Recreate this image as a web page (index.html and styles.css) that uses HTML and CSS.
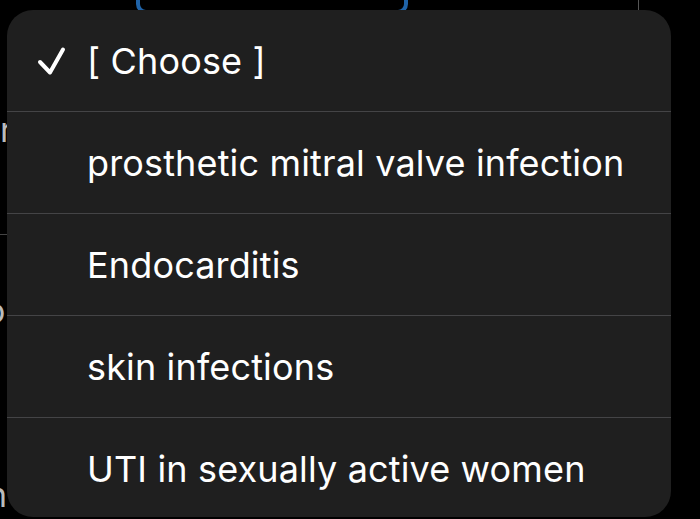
FILE: index.html
```html
<!DOCTYPE html>
<html>
<head>
<meta charset="utf-8">
<link rel="stylesheet" href="styles.css">
</head>
<body>
<div class="backdrop">
  <div class="field"></div>
  <div class="vline"></div>
  <div class="hline"></div>
  <span class="peek peek-r">r</span>
  <span class="peek peek-o">o</span>
  <span class="peek peek-n">n</span>
</div>
<div class="menu">
  <div class="item">
    <svg class="check" width="30" height="30" viewBox="0 0 30 30"><path d="M3 16 L13 26.5 L26 3.5" fill="none" stroke="#fff" stroke-width="4" stroke-linecap="round" stroke-linejoin="round"/></svg>
    <span class="label">[ Choose ]</span>
  </div>
  <div class="item"><span class="label">prosthetic mitral valve infection</span></div>
  <div class="item"><span class="label">Endocarditis</span></div>
  <div class="item"><span class="label">skin infections</span></div>
  <div class="item"><span class="label">UTI in sexually active women</span></div>
</div>
</body>
</html>
```
FILE: styles.css
```css
html, body {
  margin: 0;
  padding: 0;
  background: #000;
  width: 700px;
  height: 519px;
  overflow: hidden;
  font-family: Inter, "Liberation Sans", sans-serif;
}
.backdrop {
  position: relative;
  width: 700px;
  height: 519px;
}
.field {
  position: absolute;
  left: 136px;
  top: -20px;
  width: 264px;
  height: 26px;
  border: 4px solid #1f63a8;
  border-radius: 10px;
  background: #000;
}
.vline {
  position: absolute;
  left: 638px;
  top: 0;
  width: 1px;
  height: 14px;
  background: #555;
}
.hline {
  position: absolute;
  left: 0;
  top: 234px;
  width: 10px;
  height: 1px;
  background: #444;
}
.peek {
  position: absolute;
  color: #bbb;
  font-size: 34px;
  line-height: 1;
}
.peek-r { left: 0; top: 113px; }
.peek-o { left: -15px; top: 294px; }
.peek-n { left: -13px; top: 478px; }
.menu {
  position: absolute;
  left: 7px;
  top: 10px;
  width: 664px;
  height: 507px;
  border-radius: 26px;
  background: #1f1f1f;
  overflow: hidden;
  display: flex;
  flex-direction: column;
}
.item {
  flex: 0 0 101px;
  display: flex;
  align-items: center;
  position: relative;
  padding-left: 80px;
  box-sizing: border-box;
}
.item + .item {
  border-top: 1px solid #444446;
  flex-basis: 102px;
}
.label {
  color: #fff;
  font-size: 36px;
  letter-spacing: 0.15px;
  white-space: nowrap;
  margin-top: 0;
}
.check {
  position: absolute;
  left: 30px;
  top: 36px;
}
```
